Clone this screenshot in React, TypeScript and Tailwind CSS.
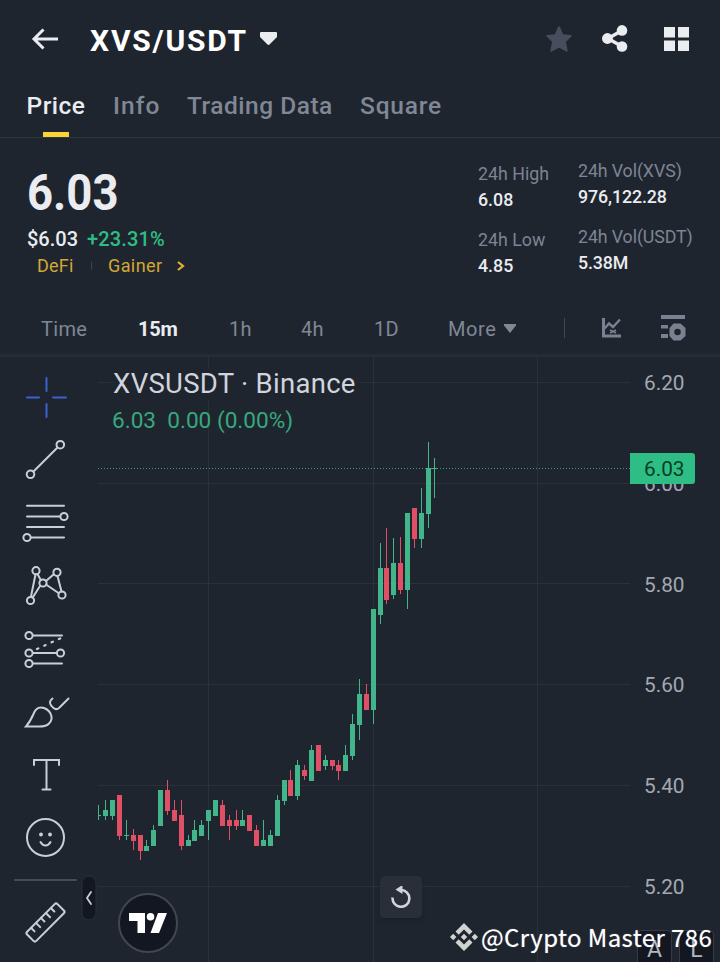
import React from "react";

type Candle = [x: number, high: number, top: number, bottom: number, low: number, up: 0 | 1];

const candles: Candle[] = [
  [96, 805, 815, 816, 820, 1], [103, 800, 810, 816, 820, 1], [110, 800, 800, 816, 820, 1],
  [117, 795, 795, 836, 840, 0], [124, 820, 835, 836, 840, 1], [131, 829, 835, 841, 850, 0],
  [138, 835, 835, 851, 860, 0], [144, 840, 846, 851, 851, 1], [151, 825, 830, 846, 846, 1],
  [158, 790, 790, 826, 826, 1], [165, 780, 790, 811, 815, 0], [172, 800, 810, 821, 821, 0],
  [179, 800, 815, 846, 850, 0], [186, 835, 840, 846, 846, 1], [192, 820, 830, 841, 841, 1],
  [199, 820, 825, 836, 836, 1], [206, 810, 810, 821, 840, 1], [213, 800, 800, 816, 816, 1],
  [220, 800, 805, 826, 826, 0], [227, 815, 820, 826, 840, 0], [234, 810, 820, 826, 830, 0],
  [240, 810, 820, 826, 826, 1], [247, 815, 815, 831, 831, 0], [254, 825, 830, 846, 846, 0],
  [261, 820, 840, 846, 846, 1], [268, 830, 835, 846, 846, 1], [275, 795, 800, 836, 836, 1],
  [282, 780, 780, 801, 805, 1], [288, 770, 780, 796, 796, 0], [295, 760, 765, 796, 800, 1],
  [302, 765, 770, 776, 780, 0], [309, 745, 750, 781, 781, 1], [316, 745, 745, 771, 771, 0],
  [323, 755, 760, 766, 770, 1], [330, 760, 760, 766, 770, 0], [336, 760, 765, 771, 780, 0],
  [343, 745, 755, 771, 771, 1], [350, 714, 724, 756, 760, 1], [357, 679, 694, 725, 740, 1],
  [364, 684, 694, 710, 710, 0], [371, 609, 609, 710, 724, 1], [378, 543, 568, 615, 624, 1],
  [384, 528, 568, 600, 604, 0], [391, 538, 563, 595, 599, 1], [398, 537, 563, 590, 594, 0],
  [405, 513, 513, 590, 609, 1], [412, 508, 508, 539, 548, 0], [419, 488, 513, 539, 548, 1],
  [426, 442, 468, 514, 528, 1], [432, 458, 468, 469, 498, 1],
];

function Header() {
  return (
    <header className="flex h-[77px] items-center pl-[31px] pr-[31px]">
      <svg width="28" height="22" viewBox="0 0 28 22" fill="none" stroke="#eaecef" strokeWidth="3">
        <path d="M27 11H3M12.5 1.500L3 11L12.500 20.500" />
      </svg>
      <h1 className="ml-[31px] mt-[4px] text-[30px] font-bold leading-[36px] tracking-[1.75px] text-white">XVS/USDT</h1>
      <svg className="ml-[12px] mt-[1px]" width="17" height="14" viewBox="0 0 17 14" fill="#eaecef">
        <path d="M1 0H16Q17 0 17 1V5L9.5 12.5Q8.5 13.4 7.5 12.5L0 5V1Q0 0 1 0Z" />
      </svg>
      <svg className="ml-auto mt-[1px]" width="28" height="28" viewBox="0 0 28 28" fill="#474d5c">
        <path d="M14 1.3Q14.8 1.3 15.2 2.3L18 9.2L25.7 9.9Q27.6 10.1 26.4 11.4L20.9 17L22.6 25.2Q22.9 27.4 21.2 26.5L14 22.8L6.8 26.5Q5.1 27.4 5.4 25.2L7.1 17L1.6 11.4Q.4 10.1 2.3 9.9L10 9.2L12.8 2.3Q13.2 1.3 14 1.3Z" />
      </svg>
      <svg className="ml-[29px]" width="26" height="27" viewBox="0 0 26 27" fill="#eaecef">
        <path d="M20 5.5L6 13.5L20 21.5" fill="none" stroke="#eaecef" strokeWidth="3.4" />
        <circle cx="20" cy="5.4" r="5.3" /><circle cx="5.4" cy="13.5" r="5.4" /><circle cx="20" cy="21.5" r="5.3" />
      </svg>
      <svg className="ml-[36px]" width="25" height="24" viewBox="0 0 25 24" fill="#eaecef">
        <path d="M0 0h11v10.500H0zM14 0h11v10.500H14zM0 13.500h11V24H0zM14 13.500h11V24H14z" />
      </svg>
    </header>
  );
}

function Tabs() {
  return (
    <nav className="flex h-[61px] border-b border-[#2f3640] pl-[27px] pt-[15px] text-[24.500px] font-medium leading-[28px] text-[#808795]">
      <div className="flex w-[58px] flex-col items-center whitespace-nowrap text-[#eaecef]">
        <span className="tracking-[0.5px]">Price</span>
        <span className="mt-[12px] h-[5px] w-[26px] bg-[#f8d33a]" />
      </div>
      <span className="ml-[28px] w-[74px] tracking-[1.100px]">Info</span>
      <span className="w-[173px] tracking-[0.500px]">Trading Data</span>
      <span className="tracking-[0.800px]">Square</span>
    </nav>
  );
}

function Stat({ label, value }: { label: string; value: string }) {
  return (
    <div className="h-[66px] whitespace-nowrap">
      <div className="text-[17.800px] leading-[26px] text-[#7d8493]">{label}</div>
      <div className="text-[17.800px] font-medium leading-[26px] text-[#eaecef]">{value}</div>
    </div>
  );
}

function Summary() {
  return (
    <section className="flex h-[164px] pl-[27px]">
      <div className="w-[451px]">
        <div className="mt-[25px] h-[60px] origin-left scale-x-[0.91] text-[50px] font-bold leading-[60px] text-[#eaecef]">6.03</div>
        <div className="mt-[4px] flex gap-[9px] text-[20px] font-medium leading-[24px]">
          <span className="text-[#eaecef]">$6.03</span>
          <span className="tracking-[0.150px] text-[#2ebd85]">+23.31%</span>
        </div>
        <div className="ml-[10px] mt-[3px] flex items-center text-[18px] leading-[24px] text-[#d3a735]">
          <span className="w-[54px] tracking-[0.200px]">DeFi</span>
          <span className="h-[8px] w-px bg-[#3c434e]" />
          <span className="ml-[16px] tracking-[0.400px]">Gainer</span>
          <svg className="ml-[15px]" width="8" height="10" viewBox="0 0 8 10" fill="none" stroke="#e2b236" strokeWidth="2.200"><path d="M1 1L6 5L1 9" /></svg>
        </div>
      </div>
      <div className="w-[100px] pt-[23px]"><Stat label="24h High" value="6.08" /><Stat label="24h Low" value="4.85" /></div>
      <div className="pt-[20px] tracking-[-0.100px]"><Stat label="24h Vol(XVS)" value="976,122.28" /><Stat label="24h Vol(USDT)" value="5.38M" /></div>
    </section>
  );
}

function Intervals() {
  return (
    <div className="flex h-[52px] items-center pl-[41px] text-[20px] leading-[24px] tracking-[0.300px] text-[#808795]">
      <span className="mt-[2px] w-[97px]">Time</span>
      <span className="mt-[2px] w-[91px] font-bold tracking-[-0.200px] text-[#eaecef]">15m</span>
      <span className="mt-[2px] w-[72px]">1h</span>
      <span className="mt-[2px] w-[73px]">4h</span>
      <span className="mt-[2px] w-[74px]">1D</span>
      <span className="mt-[2px] w-[56px] tracking-[0.600px]">More</span>
      <svg width="12" height="9" viewBox="0 0 12 9" fill="#808795"><path d="M0 0H12V1.500L6 9L0 1.500Z" /></svg>
      <span className="ml-[48px] h-[20px] w-px bg-[#404752]" />
      <svg className="ml-[37px]" width="20" height="20" viewBox="0 0 20 20" fill="none" stroke="#7b8191">
        <path strokeWidth="3" d="M1.500 0V18H19" /><path strokeWidth="2.400" d="M2.500 10.500L7 5.500L11 9L18 1.500" />
        <path strokeWidth="1.800" d="M8 12L14 15M14 12L8 15" />
      </svg>
      <svg className="ml-[38px]" width="26" height="26" viewBox="0 0 26 26" fill="#7b8191">
        <path d="M1 0H25V4H1zM1 10h7v3.500H1zM1 19h7v4H1z" />
        <path fillRule="evenodd" d="M13.500 8.500h7L25.500 13v8L20.500 25.500h-7L9.500 21v-8zM17.500 13.700a3.300 3.300 0 100 6.600 3.300 3.300 0 000-6.600z" />
      </svg>
    </div>
  );
}

function DrawingTools() {
  return (
    <svg className="shrink-0" width="98" height="608" viewBox="0 354 98 608" fill="none" stroke="#c9ced8" strokeWidth="2" strokeLinecap="round">
      <path stroke="#3b62cf" d="M46.500 378V391M46.500 404V417M27 397.500H39M53 397.500H66" />
      <path d="M33.500 471.500L57.500 447.500" />
      <circle cx="60.300" cy="444.700" r="3.800" /><circle cx="30.500" cy="474.300" r="3.800" />
      <path d="M27 505.800H64M27 516.500H60M27 527H64M31 537.500H64" />
      <circle cx="64" cy="516.500" r="3.600" /><circle cx="27" cy="537.500" r="3.600" />
      <path d="M35.500 574.500L31 596.500M37.500 574L40.500 579.500M46 581L53.500 574.500M57.500 576L61.500 591.500M46 584.500L58.500 593M40 586L33 597" />
      <circle cx="36" cy="570.700" r="3.600" /><circle cx="57" cy="572.300" r="3.600" /><circle cx="43" cy="583" r="3.600" /><circle cx="62" cy="595" r="3.600" /><circle cx="30.500" cy="600.500" r="3.600" />
      <path d="M33 635.500H62M33 653H56M33 663.500H62" />
      <path strokeDasharray="1.500 6.500" strokeWidth="2.200" d="M37 649L61 638" />
      <circle cx="29" cy="635.500" r="3.600" /><circle cx="29" cy="653" r="3.600" /><circle cx="60.500" cy="653" r="3.600" /><circle cx="29" cy="663.500" r="3.600" />
      <path d="M26 726.500Q30 722 33.500 714C36 707 41 707 44 708C52 711 53.500 719 49 723.500C46 727 42 726.500 37 726.500ZM52.500 698.500Q48 702 51.500 706Q55.500 711 59 708L68.500 698.500" />
      <path d="M34 765V760H59V765M46.500 760V789.500M42.500 789.500H50.500" />
      <circle cx="45.500" cy="837.500" r="18.500" />
      <path d="M40.500 842C43 846.500 48 846.500 50.500 842" />
      <g fill="#c9ced8" stroke="none"><circle cx="41" cy="834.500" r="1.900" /><circle cx="50" cy="834.500" r="1.900" /></g>
      <path stroke="#474c57" d="M15 880H76" />
      <g transform="rotate(-45 45.500 922.500)">
        <rect x="24" y="916" width="43" height="13" rx="2" />
        <path d="M31.500 916v5M38.500 916v6M45.500 916v5M52.500 916v6M59.500 916v5" />
      </g>
      <rect x="82" y="876" width="14" height="44" rx="7" fill="#131722" stroke="#2b2e39" strokeWidth="1" />
      <path strokeWidth="1.800" d="M91 892L87 898L91 904" />
    </svg>
  );
}

function Plot() {
  return (
    <svg className="shrink-0" width="532" height="608" viewBox="98 354 532 608" shapeRendering="crispEdges">
      <g fill="#29313b">
        {[382, 483, 583, 684, 785, 886].map((y) => <rect key={y} x="98" y={y} width="532" height="1" />)}
        {[208, 373, 537].map((x) => <rect key={x} x={x} y="354" width="1" height="608" />)}
      </g>
      <path d="M98 468.500H630" stroke="#3a9b7b" strokeDasharray="1 2" />
      {candles.map(([x, high, top, bottom, low, up]) => (
        <g key={x} fill={up ? "#43b58a" : "#df5066"}>
          <rect x={x + 2} y={high} width="1" height={low - high} />
          <rect x={x} y={top} width="5" height={bottom - top} />
        </g>
      ))}
    </svg>
  );
}

function PriceAxis() {
  return (
    <div className="flex w-[90px] flex-col pt-[17px] text-[20.800px] leading-[24px] text-[#a3a8b3]">
      {["6.20", "6.00", "5.80", "5.60", "5.40", "5.20"].map((p) => <div key={p} className="h-[100.800px] shrink-0 pl-[14px]">{p}</div>)}
    </div>
  );
}

function Chart() {
  return (
    <main className="relative flex h-[608px] overflow-hidden">
      <div className="absolute inset-x-0 top-0 h-[3px] bg-[#252c37]" />
      <DrawingTools />
      <Plot />
      <PriceAxis />
      <div className="absolute left-[113px] top-[13px] bg-[#1f252f] pr-1 text-[27.500px] leading-[34px] tracking-[0.280px] text-[#d1d4dc]">XVSUSDT · Binance</div>
      <div className="absolute left-[112px] top-[53px] whitespace-pre text-[22.600px] leading-[28px] text-[#36a97c]">6.03  0.00 (0.00%)</div>
      <div className="absolute left-[630px] top-[99px] h-[31px] w-[65px] rounded-r-[3px] bg-[#2ebd85] pl-[14px] text-[20.800px] leading-[32px] text-[#073d24]">6.03</div>
      <div className="absolute left-[118px] top-[539px] flex size-[60px] items-center justify-center rounded-full border-2 border-[#434651] bg-[#131722]">
        <svg width="38" height="20" viewBox="0 0 38 20" fill="#fff"><path d="M0 0H16V20H8.500V8H0zM29 0H38L30 20H21.500z" /><circle cx="21.500" cy="3.800" r="3.800" /></svg>
      </div>
      <div className="absolute left-[380px] top-[522px] flex size-[42px] items-center justify-center rounded-[5px] bg-[#2a2e39] shadow-md">
        <svg width="20" height="22" viewBox="0 0 20 22" fill="none" stroke="#d1d4dc" strokeWidth="2.600"><path d="M1.600 11.500A8.400 8.400 0 1 0 10 4H8" /><path d="M11.500 -1V8L4.500 3.500Z" fill="#d1d4dc" stroke="none" /></svg>
      </div>
      {[{ k: "A", pos: "left-[637px]" }, { k: "L", pos: "left-[679px]" }].map(({ k, pos }) => (
        <div key={k} className={`absolute top-[576px] flex h-[38px] w-[35px] items-center justify-center rounded-[5px] border border-[#363a45] bg-[#131722] text-[23px] leading-none text-[#b2b5be] ${pos}`}>{k}</div>
      ))}
      <div className="absolute left-[450px] top-[565px] flex items-center whitespace-nowrap font-['Noto_Sans_CJK_SC','Noto_Sans',sans-serif] text-[24px] leading-[36px] tracking-[0.400px] text-white [text-shadow:0_0_1px_#ffffff80]">
        <svg className="mr-[3px]" width="28" height="28" viewBox="0 0 28 28" fill="#d2d2d2">
          <path d="M14 0L22.500 8.500L19.300 11.700L14 6.400L8.700 11.700L5.500 8.500zM14 28L5.500 19.500L8.700 16.300L14 21.600L19.300 16.300L22.500 19.500zM3.200 10.800L6.400 14L3.200 17.200L0 14zM24.800 10.800L28 14L24.800 17.200L21.600 14zM14 10.800L17.200 14L14 17.200L10.800 14z" />
        </svg>
        <span>@Crypto Master 786</span>
      </div>
    </main>
  );
}

export default function App() {
  return (
    <div className="h-[962px] w-[720px] overflow-hidden bg-[#1f252f] font-['Roboto','Liberation_Sans',sans-serif]">
      <Header />
      <Tabs />
      <Summary />
      <Intervals />
      <Chart />
    </div>
  );
}
